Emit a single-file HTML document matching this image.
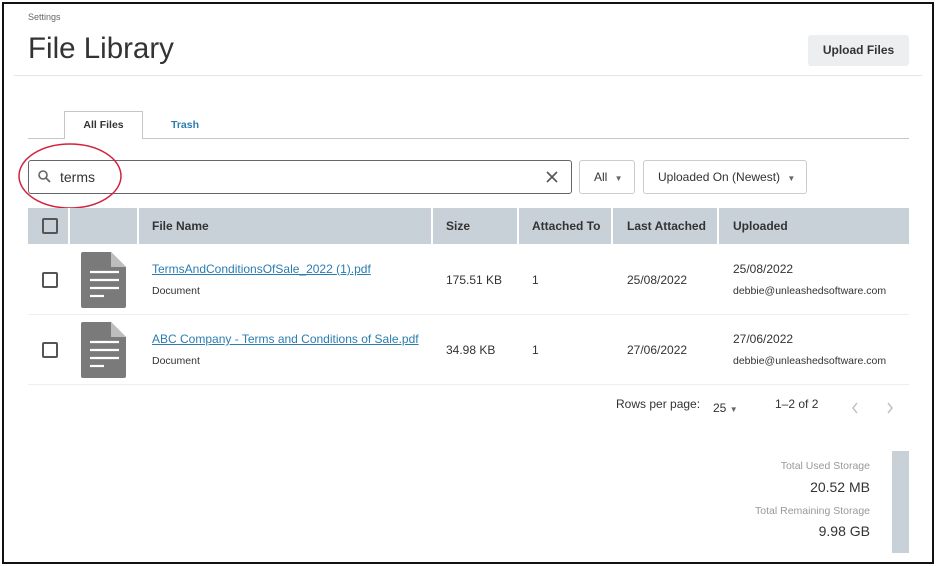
<!DOCTYPE html>
<html><head><style>
*{margin:0;padding:0;box-sizing:border-box}
body{width:938px;height:566px;background:#fff;font-family:"Liberation Sans",Arial,sans-serif;position:relative;overflow:hidden;color:#333}
.a{position:absolute}
.frame{left:2px;top:2px;width:932px;height:562px;border:2px solid #111}
.th{font-size:12px;font-weight:bold;color:#333;top:219px}
.sep{top:208px;width:2px;height:36px;background:#fff}
.cb{width:16px;height:16px;border:2px solid #555;border-radius:2px}
.t{font-size:12px;color:#333}
.s{font-size:10.5px;color:#333}
.lnk{font-size:12px;color:#2a7db0;text-decoration:underline}
.doc{width:45px;height:56px}
</style></head><body>
<div class="a frame"></div>
<div class="a" style="left:28px;top:12px;font-size:9px;color:#666">Settings</div>
<div class="a" style="left:28px;top:32px;font-size:29.5px;color:#333">File Library</div>
<div class="a" style="left:808px;top:35px;width:101px;height:31px;background:#eceef0;border-radius:3px;font-size:12px;font-weight:bold;line-height:31px;text-align:center;color:#333">Upload Files</div>
<div class="a" style="left:14px;top:75px;width:908px;height:1px;background:#e6e6e6"></div>
<div class="a" style="left:28px;top:138px;width:881px;height:1px;background:#c6c6c6"></div>
<div class="a" style="left:64px;top:111px;width:79px;height:28px;border:1px solid #c6c6c6;border-bottom:none;background:#fff;font-size:10.5px;font-weight:bold;text-align:center;line-height:27px">All Files</div>
<div class="a" style="left:171px;top:119px;font-size:10.5px;font-weight:bold;color:#2a7db0">Trash</div>
<div class="a" style="left:28px;top:160px;width:544px;height:34px;border:1px solid #666;border-radius:3px"></div>
<svg class="a" style="left:37px;top:169px" width="15" height="15" viewBox="0 0 15 15"><circle cx="6" cy="6" r="4" fill="none" stroke="#666" stroke-width="1.6"/><line x1="9" y1="9" x2="13" y2="13" stroke="#666" stroke-width="1.8"/></svg>
<div class="a" style="left:60px;top:169px;font-size:14px;color:#333">terms</div>
<svg class="a" style="left:546px;top:171px" width="12" height="12"><path d="M1 1L11 11M11 1L1 11" stroke="#555" stroke-width="1.6"/></svg>
<svg class="a" style="left:18px;top:142px" width="108" height="70"><ellipse cx="52" cy="34" rx="51" ry="32" fill="none" stroke="#d0223a" stroke-width="1.5"/></svg>
<div class="a" style="left:579px;top:160px;width:56px;height:34px;border:1px solid #ccc;border-radius:3px;font-size:12px;line-height:32px;padding-left:14px">All <span style="font-size:8px;color:#666;margin-left:4px">▼</span></div>
<div class="a" style="left:643px;top:160px;width:164px;height:34px;border:1px solid #ccc;border-radius:3px;font-size:12px;line-height:32px;padding-left:14px">Uploaded On (Newest) <span style="font-size:8px;color:#666;margin-left:4px">▼</span></div>
<div class="a" style="left:28px;top:208px;width:881px;height:36px;background:#c8d0d8"></div>
<div class="a sep" style="left:68px"></div><div class="a sep" style="left:137px"></div><div class="a sep" style="left:431px"></div><div class="a sep" style="left:517px"></div><div class="a sep" style="left:611px"></div><div class="a sep" style="left:717px"></div>
<div class="a cb" style="left:42px;top:218px"></div>
<div class="a th" style="left:152px">File Name</div>
<div class="a th" style="left:446px">Size</div>
<div class="a th" style="left:532px">Attached To</div>
<div class="a th" style="left:627px">Last Attached</div>
<div class="a th" style="left:733px">Uploaded</div>
<div class="a" style="left:28px;top:314px;width:881px;height:1px;background:#eee"></div>
<div class="a" style="left:28px;top:384px;width:881px;height:1px;background:#eee"></div>
<div class="a cb" style="left:42px;top:272px"></div>
<svg class="a doc" style="left:81px;top:252px" viewBox="0 0 45 56"><path d="M2 0H30L45 15V54a2 2 0 0 1-2 2H2a2 2 0 0 1-2-2V2a2 2 0 0 1 2-2z" fill="#7a7a7a"/><path d="M30 0L45 15H30z" fill="#bdbdbd"/><g stroke="#fff" stroke-width="2.2"><line x1="9" y1="20" x2="38" y2="20"/><line x1="9" y1="28" x2="38" y2="28"/><line x1="9" y1="36" x2="38" y2="36"/><line x1="9" y1="44" x2="23" y2="44"/></g></svg>
<div class="a lnk" style="left:152px;top:262px">TermsAndConditionsOfSale_2022 (1).pdf</div>
<div class="a s" style="left:152px;top:285px">Document</div>
<div class="a t" style="left:446px;top:273px">175.51 KB</div>
<div class="a t" style="left:532px;top:273px">1</div>
<div class="a t" style="left:627px;top:273px">25/08/2022</div>
<div class="a t" style="left:733px;top:262px">25/08/2022</div>
<div class="a s" style="left:733px;top:285px">debbie@unleashedsoftware.com</div>
<div class="a cb" style="left:42px;top:342px"></div>
<svg class="a doc" style="left:81px;top:322px" viewBox="0 0 45 56"><path d="M2 0H30L45 15V54a2 2 0 0 1-2 2H2a2 2 0 0 1-2-2V2a2 2 0 0 1 2-2z" fill="#7a7a7a"/><path d="M30 0L45 15H30z" fill="#bdbdbd"/><g stroke="#fff" stroke-width="2.2"><line x1="9" y1="20" x2="38" y2="20"/><line x1="9" y1="28" x2="38" y2="28"/><line x1="9" y1="36" x2="38" y2="36"/><line x1="9" y1="44" x2="23" y2="44"/></g></svg>
<div class="a lnk" style="left:152px;top:332px">ABC Company - Terms and Conditions of Sale.pdf</div>
<div class="a s" style="left:152px;top:355px">Document</div>
<div class="a t" style="left:446px;top:343px">34.98 KB</div>
<div class="a t" style="left:532px;top:343px">1</div>
<div class="a t" style="left:627px;top:343px">27/06/2022</div>
<div class="a t" style="left:733px;top:332px">27/06/2022</div>
<div class="a s" style="left:733px;top:355px">debbie@unleashedsoftware.com</div>
<div class="a t" style="left:616px;top:397px">Rows per page:</div>
<div class="a t" style="left:713px;top:401px">25 <span style="font-size:8px;color:#666">▼</span></div>
<div class="a t" style="left:775px;top:397px">1–2 of 2</div>
<svg class="a" style="left:851px;top:402px" width="8" height="12"><path d="M6 1L2 6L6 11" fill="none" stroke="#bbb" stroke-width="1.4"/></svg>
<svg class="a" style="left:886px;top:402px" width="8" height="12"><path d="M2 1L6 6L2 11" fill="none" stroke="#bbb" stroke-width="1.4"/></svg>
<div class="a" style="left:892px;top:451px;width:17px;height:102px;background:#c8d0d8"></div>
<div class="a" style="right:68px;top:460px;font-size:10.5px;color:#999;text-align:right">Total Used Storage</div>
<div class="a" style="right:68px;top:479px;font-size:14px;color:#333;text-align:right">20.52 MB</div>
<div class="a" style="right:68px;top:505px;font-size:10.5px;color:#999;text-align:right">Total Remaining Storage</div>
<div class="a" style="right:68px;top:523px;font-size:14px;color:#333;text-align:right">9.98 GB</div>
</body></html>
